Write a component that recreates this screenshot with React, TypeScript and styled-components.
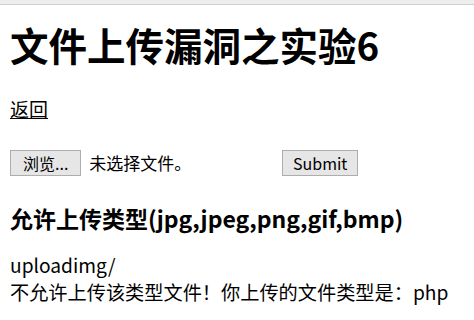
import styled, { createGlobalStyle } from 'styled-components';

const FONT = `'Noto Sans CJK SC', 'Noto Sans', sans-serif`;

const GlobalStyle = createGlobalStyle`
  html, body {
    margin: 0;
    padding: 0;
    background: #ffffff;
  }
  body {
    font-family: ${FONT};
    color: #000;
  }
`;

const TopEdge = styled.div`
  height: 4px;
  background: #eeeeee;
  border-bottom: 1px solid #cfcfcf;
`;

const Page = styled.div`
  padding: 0 10px;
`;

const Title = styled.h1`
  margin: 16px 0 0;
  font-size: 38.5px;
  line-height: 46px;
  font-weight: 700;
  white-space: nowrap;
`;

const BackLink = styled.a`
  display: inline-block;
  margin-top: 30px;
  font-size: 19px;
  line-height: 24px;
  color: #000;
  text-decoration: underline;
`;

const Form = styled.form`
  display: flex;
  align-items: center;
  margin-top: 27px;
  height: 28px;
`;

const FilePicker = styled.div`
  display: flex;
  align-items: center;
  gap: 8px;
  width: 272px;
`;

const FormButton = styled.button<{ $pad: number }>`
  height: 26px;
  padding: 0 ${(p) => p.$pad}px;
  font-family: ${FONT};
  font-size: 16px;
  line-height: 24px;
  color: #000;
  background: #e6e6e6;
  border: 1px solid #adadad;
  border-radius: 0;
`;

const FileStatus = styled.span`
  font-size: 17px;
  line-height: 26px;
`;

const SectionTitle = styled.h3`
  margin: 27px 0 0;
  font-size: 23px;
  line-height: 28px;
  font-weight: 700;
  white-space: nowrap;
`;

const Result = styled.div`
  margin-top: 20px;
  font-size: 19.2px;
  line-height: 27px;
  white-space: nowrap;
`;

export default function App() {
  return (
    <>
      <GlobalStyle />
      <TopEdge />
      <Page>
        <Title>文件上传漏洞之实验6</Title>
        <BackLink href="#">返回</BackLink>
        <Form onSubmit={(e) => e.preventDefault()}>
          <FilePicker>
            <FormButton type="button" $pad={12}>浏览...</FormButton>
            <FileStatus>未选择文件。</FileStatus>
          </FilePicker>
          <FormButton type="submit" $pad={10}>Submit</FormButton>
        </Form>
        <SectionTitle>允许上传类型(jpg,jpeg,png,gif,bmp)</SectionTitle>
        <Result>
          uploadimg/
          <br />
          不允许上传该类型文件！你上传的文件类型是：php
        </Result>
      </Page>
    </>
  );
}
